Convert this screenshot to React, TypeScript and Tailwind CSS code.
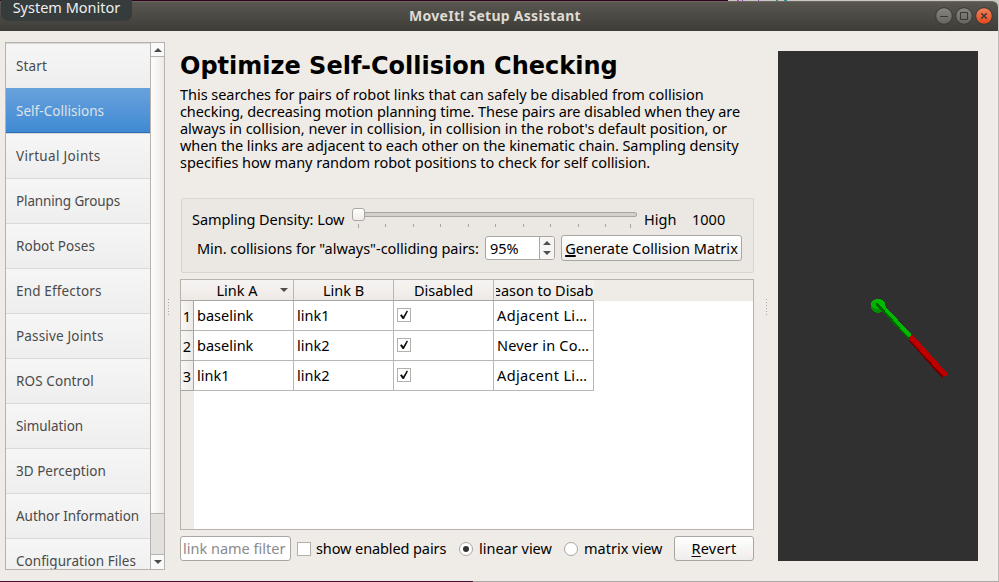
const steps = [
  { label: "Start", track: "tracking-[0.14px]" },
  { label: "Self-Collisions", track: "tracking-[0.03px]", active: true },
  { label: "Virtual Joints", track: "tracking-[0.33px]" },
  { label: "Planning Groups", track: "tracking-[-0.13px]" },
  { label: "Robot Poses", track: "tracking-[0.06px]" },
  { label: "End Effectors", track: "tracking-[0.15px]" },
  { label: "Passive Joints", track: "tracking-[0.17px]" },
  { label: "ROS Control", track: "tracking-[0.1px]" },
  { label: "Simulation", track: "tracking-[-0.07px]" },
  { label: "3D Perception", track: "tracking-[0.03px]" },
  { label: "Author Information", track: "tracking-[-0.04px]" },
  { label: "Configuration Files", track: "tracking-[0.04px]" },
];

const intro = [
  { text: "This searches for pairs of robot links that can safely be disabled from collision", track: "tracking-[-0.035px]" },
  { text: "checking, decreasing motion planning time. These pairs are disabled when they are", track: "tracking-[-0.085px]" },
  { text: "always in collision, never in collision, in collision in the robot's default position, or", track: "tracking-[-0.03px]" },
  { text: "when the links are adjacent to each other on the kinematic chain. Sampling density", track: "tracking-[-0.067px]" },
  { text: "specifies how many random robot positions to check for self collision.", track: "tracking-[-0.03px]" },
];

const pairs = [
  { a: "baselink", b: "link1", reason: "Adjacent Li…", track: "tracking-[0.36px]" },
  { a: "baselink", b: "link2", reason: "Never in Co…", track: "tracking-[0.18px]" },
  { a: "link1", b: "link2", reason: "Adjacent Li…", track: "tracking-[0.36px]" },
];

function Arrow({ up = false }: { up?: boolean }) {
  return (
    <svg width="8" height="4" viewBox="0 0 8 4" className="block shrink-0">
      <path d={up ? "M0 4 L4 0 L8 4 Z" : "M0 0 L4 4 L8 0 Z"} fill="#4d4d4d" />
    </svg>
  );
}

function TitleBar() {
  return (
    <div className="bg-[linear-gradient(90deg,#2c001e_728px,#c9c7c4_728px)] pt-px">
      <div className="relative mr-px flex h-[30px] items-center justify-center rounded-tr-[6px] border-t border-[#6b675d] bg-linear-to-b from-[#595650] to-[#3e3d38]">
        <div className="absolute -top-0.5 left-px flex h-[21px] w-[131px] items-center justify-center rounded-b-[7px] bg-[#363b3c] pb-[6px] text-[14.5px] leading-[15px] whitespace-nowrap text-[#eef0f0]">
          System Monitor
        </div>
        <span className="pr-[8px] pb-[2px] text-[14px] font-bold tracking-[0.28px] text-[#dfdbd2]">MoveIt! Setup Assistant</span>
        <svg className="absolute top-[5px] right-[4px]" width="60" height="20" viewBox="0 0 60 20">
          <defs>
            <linearGradient id="grey" x1="0" y1="0" x2="0" y2="1">
              <stop offset="0" stopColor="#888680" />
              <stop offset="1" stopColor="#66645e" />
            </linearGradient>
            <linearGradient id="close" x1="0" y1="0" x2="0" y2="1">
              <stop offset="0" stopColor="#f4835c" />
              <stop offset="1" stopColor="#e1481b" />
            </linearGradient>
          </defs>
          <g stroke="#393834">
            <circle cx="10" cy="9" r="8.3" fill="url(#grey)" />
            <circle cx="30" cy="9" r="8.3" fill="url(#grey)" />
            <circle cx="50" cy="9" r="8.3" fill="url(#close)" />
            <path d="M6 9.5 H14 M26.5 5.5 H33.5 V12.5 H26.5 Z" fill="none" />
            <path d="M47.2 6.2 L52.8 11.8 M52.8 6.2 L47.2 11.8" strokeWidth="1.4" />
          </g>
        </svg>
      </div>
      {/* window peeking out behind the title bar */}
      <div className="absolute top-0 left-[737px] flex h-px">
        <i className="h-px w-[2px] bg-[#b44bc4]" />
        <i className="ml-[3px] h-px w-px bg-[#9333cc]" />
        <i className="ml-[15px] h-px w-px bg-[#9333cc]" />
        <i className="ml-[17px] h-px w-[2px] bg-[#2a8a7c]" />
        <i className="ml-[6px] h-px w-[3px] bg-[#2a8a8c]" />
      </div>
    </div>
  );
}

function Sidebar() {
  return (
    <div className="mt-[11px] ml-[5px] flex h-[528px] w-[160px] shrink-0 border border-[#b6b2ae]">
      <ul className="w-[144px] overflow-hidden">
        {steps.map((s) => (
          <li
            key={s.label}
            className={
              "flex h-[45px] items-center border-t pl-[10px] text-[13.5px] whitespace-nowrap " +
              s.track +
              (s.active
                ? " border-t-[#67a1dc] border-b border-b-[#2a6db4] bg-linear-to-b from-[#67a1dc] to-[#3f8ad4] pt-px text-[#dfe3e8]"
                : " border-t-[#d9d9d9] bg-linear-to-b from-[#f6f6f6] to-[#eeeeee] text-[#4a4a4a]")
            }
          >
            {s.label}
          </li>
        ))}
      </ul>
      <div className="flex w-[14px] flex-col border-l border-[#b6b2ae] bg-[#e2e1de]">
        <div className="flex h-[14px] items-center justify-center border-b border-[#b6b2ae] bg-[#fafafa] pt-px">
          <Arrow up />
        </div>
        <div className="h-[457px] border-b border-[#b6b2ae] bg-linear-to-r from-[#fdfdfd] to-[#eeebe7]" />
        <div className="flex-1" />
        <div className="flex h-[15px] items-center justify-center border-t border-[#b6b2ae] bg-[#fafafa] pb-px">
          <Arrow />
        </div>
      </div>
    </div>
  );
}

function Splitter() {
  return (
    <div className="flex flex-col gap-[2px]">
      {[...Array(6)].map((_, i) => (
        <i key={i} className="size-px bg-[#aaa6a1]" />
      ))}
    </div>
  );
}

function SamplingPanel() {
  return (
    <div className="ml-px h-[75px] rounded-[2px] border border-[#d8d4cf] bg-[#ebe7e2] text-[14.5px] whitespace-nowrap">
      <div className="mt-[9px] flex h-[24px] items-center pl-[10px]">
        <span className="w-[160px] tracking-[-0.07px]">Sampling Density: Low</span>
        <svg width="286" height="24" viewBox="352 208 286 24" className="shrink-0">
          <defs>
            <linearGradient id="knob" x1="0" y1="0" x2="0" y2="1">
              <stop offset="0" stopColor="#ffffff" />
              <stop offset="1" stopColor="#efedea" />
            </linearGradient>
          </defs>
          <rect x="354.500" y="212.500" width="282" height="4" rx="1.500" fill="#d3d0cc" stroke="#aaa6a2" />
          <rect x="352.500" y="208.500" width="12" height="12" rx="2.500" fill="url(#knob)" stroke="#aaa6a2" />
          {[358, 385, 413, 440, 468, 495, 523, 550, 578, 605, 630].map((x, i) => (
            <path key={x} d={`M${x + 0.5} 224 V${i % 10 ? 227 : 228}`} stroke="#a8a4a0" />
          ))}
        </svg>
        <span className="ml-[6px] w-[48px]">High</span>
        <span>1000</span>
      </div>
      <div className="mt-[3px] flex h-[26px] items-center pl-[15px]">
        <span className="w-[288px] pt-[2px] tracking-[-0.04px]">Min. collisions for "always"-colliding pairs:</span>
        <div className="flex h-[24px] w-[70px] rounded-[3px] border border-[#aaa6a1] bg-white">
          <span className="flex flex-1 items-center pt-[2px] pl-[4px]">95%</span>
          <div className="flex w-[15px] flex-col items-center justify-center gap-[6px] rounded-r-[2px] border-l border-[#aaa6a1] bg-[#f6f5f4]">
            <Arrow up />
            <Arrow />
          </div>
        </div>
        <button className="ml-[6px] h-[26px] w-[181px] rounded-[3px] border border-[#aaa6a1] bg-linear-to-b from-white to-[#efedeb] pt-[2px] tracking-[0.02px]">
          <span className="underline decoration-2 underline-offset-[1px]">G</span>enerate Collision Matrix
        </button>
      </div>
    </div>
  );
}

function PairsTable() {
  const head = "flex h-[20px] items-center justify-center border-r border-[#bab6b2] pt-[2px]";
  const cell = "flex items-center border-r border-b border-[#bab6b2] pl-[3px]";
  return (
    <div className="mt-[6px] flex h-[251px] flex-col border border-[#b6b2ae] bg-white text-[14.5px] whitespace-nowrap">
      <div className="flex h-[21px] bg-[#efebe6]">
        <div className="flex w-[413px] border-b border-[#a9a5a1] bg-linear-to-b from-[#f6f4f2] to-[#edeae6]">
          <div className={head + " relative w-[113px]"}>
            Link A
            <span className="absolute top-[8px] right-[5px]"><Arrow /></span>
          </div>
          <div className={head + " w-[100px]"}>Link B</div>
          <div className={head + " w-[100px]"}>Disabled</div>
          <div className="ml-[2px] flex h-[20px] w-[97px] items-center justify-center overflow-hidden pt-[2px] tracking-[-0.03px]">
            Reason to Disable
          </div>
        </div>
      </div>
      <div className="flex flex-1">
        <div className="w-[13px] bg-[#efebe6]">
          {pairs.map((_, i) => (
            <div key={i} className="flex h-[30px] items-center justify-center border-r border-b border-[#a9a5a1] bg-linear-to-r from-[#f9f8f7] to-[#edeae6] pt-[3px]">
              {i + 1}
            </div>
          ))}
        </div>
        <div>
          {pairs.map((p, i) => (
            <div key={i} className="flex h-[30px]">
              <div className={cell + " w-[100px]"}>{p.a}</div>
              <div className={cell + " w-[100px]"}>{p.b}</div>
              <div className={cell + " w-[100px] pb-px"}>
                <svg width="14" height="14" viewBox="0 0 14 14">
                  <rect x="0.500" y="0.500" width="13" height="13" fill="#fff" stroke="#b4b0ab" />
                  <path d="M3 7.2 L4.8 6.3 L6.2 8.6 L9.8 2.6 L11 3.2 L6.900 11 L5.600 11 Z" fill="#111" />
                </svg>
              </div>
              <div className={cell + " w-[100px] " + p.track}>{p.reason}</div>
            </div>
          ))}
        </div>
      </div>
    </div>
  );
}

function FilterBar() {
  return (
    <div className="mt-[6px] flex h-[25px] items-center text-[14.5px] whitespace-nowrap">
      <div className="flex h-[25px] w-[111px] items-center rounded-[3px] border border-[#aaa6a1] bg-white pl-[2px] text-[#8b8b8b]">
        link name filter
      </div>
      <i className="ml-[6px] size-[14px] border border-[#b4b0ab] bg-white" />
      <span className="ml-[5px] w-[143px] tracking-[-0.1px]">show enabled pairs</span>
      <i className="flex size-[14px] items-center justify-center rounded-full border border-[#aaa6a1] bg-white">
        <i className="size-[6px] rounded-full bg-[#333]" />
      </i>
      <span className="ml-[6px] w-[85px]">linear view</span>
      <i className="size-[14px] rounded-full border border-[#aaa6a1] bg-white" />
      <span className="ml-[6px] w-[90px]">matrix view</span>
      <button className="h-[25px] w-[80px] rounded-[3px] border border-[#aaa6a1] bg-linear-to-b from-white to-[#efedeb] tracking-[0.2px]">
        <span className="underline decoration-1 underline-offset-[2px]">R</span>evert
      </button>
    </div>
  );
}

function RobotView() {
  return (
    <svg className="mt-[20px] block shrink-0" width="200" height="510" viewBox="778 51 200 510" shapeRendering="crispEdges">
      <rect x="778" y="51" width="200" height="510" fill="#303030" />
      {/* base */}
      <path d="M871 303 H885 V308 L882 312 L878 313 L874 312 L871 309 Z" fill="#008f00" />
      <ellipse cx="878" cy="304" rx="7" ry="5" fill="#00b400" />
      {/* link1 */}
      <path d="M876 303 L879 303 L909 335 L909 339 L905 336 L876 305 Z" fill="#006400" />
      <path d="M878 303 L883 302 L886 307 L911 334 L911 336 L908 337 Z" fill="#00b800" />
      {/* link2 */}
      <path d="M909 336 L943 373 L943 378 L940 376 L909 341 Z" fill="#6e0000" />
      <path d="M911 335 L914 336 L947 373 L947 376 L943 376 L909 339 Z" fill="#bc0000" />
    </svg>
  );
}

export default function App() {
  return (
    <div className="relative h-[582px] w-[999px] overflow-hidden bg-[#efebe6] font-['Noto_Sans',sans-serif] text-black">
      <TitleBar />
      <div className="flex h-[550px] border-r border-[#bcb9b6]">
        <Sidebar />
        <div className="mt-[268px] ml-[3px] w-[12px] shrink-0">
          <Splitter />
        </div>
        <div className="w-[574px] shrink-0 pt-[21px]">
          <h1 className="h-[28px] font-['DejaVu_Sans',sans-serif] text-[24px] leading-[28px] font-bold whitespace-nowrap">
            Optimize Self-Collision Checking
          </h1>
          <div className="mt-[6px] mb-[27px] text-[14.5px] leading-[17px] whitespace-nowrap">
            {intro.map((l) => (
              <p key={l.text} className={l.track}>{l.text}</p>
            ))}
          </div>
          <SamplingPanel />
          <PairsTable />
          <FilterBar />
        </div>
        <div className="mt-[268px] ml-[12px] w-[12px] shrink-0">
          <Splitter />
        </div>
        <RobotView />
      </div>
      <div className="h-px bg-[linear-gradient(90deg,#4a0d33_473px,#aaa7a4_473px)]" />
    </div>
  );
}
